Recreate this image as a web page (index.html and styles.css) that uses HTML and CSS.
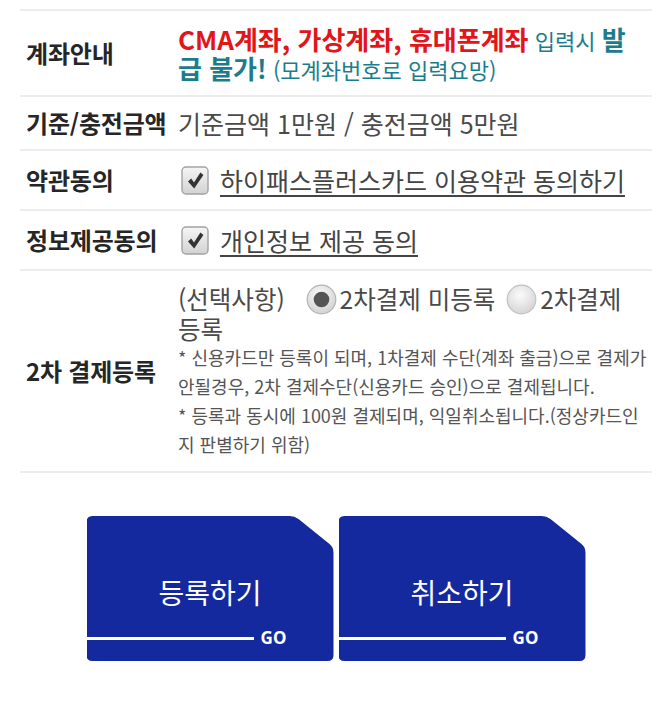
FILE: index.html
```html
<!DOCTYPE html>
<html lang="ko">
<head>
<meta charset="utf-8">
<title>2차 결제등록</title>
<link rel="stylesheet" href="styles.css">
</head>
<body>
<div class="form-table">
  <div class="row row-account">
    <div class="label">계좌안내</div>
    <div class="value account"><span class="warn">CMA계좌, 가상계좌, 휴대폰계좌</span> <span class="teal">입력시</span> <strong class="teal-strong">발급 불가!</strong> <span class="teal">(모계좌번호로 입력요망)</span></div>
  </div>
  <div class="row row-amount">
    <div class="label">기준/충전금액</div>
    <div class="value plain">기준금액 1만원 / 충전금액 5만원</div>
  </div>
  <div class="row row-check">
    <div class="label">약관동의</div>
    <div class="value check-line">
      <svg class="checkbox" width="28" height="29" viewBox="0 0 28 29"><defs><linearGradient id="cbg" x1="0" y1="0" x2="0" y2="1"><stop offset="0" stop-color="#f6f6f6"/><stop offset="1" stop-color="#d2d2d2"/></linearGradient></defs><rect x="1" y="1" width="26" height="27" rx="4" fill="url(#cbg)" stroke="#a3a3a3" stroke-width="1.4"/><path d="M7 15.5 L10.2 12.6 L13 16.6 L19.4 6.6 L22.4 9 L13.2 22.6 Z" fill="#333"/></svg>
      <a class="agree-link" href="#">하이패스플러스카드 이용약관 동의하기</a>
    </div>
  </div>
  <div class="row row-check">
    <div class="label">정보제공동의</div>
    <div class="value check-line">
      <svg class="checkbox" width="28" height="29" viewBox="0 0 28 29"><defs><linearGradient id="cbg2" x1="0" y1="0" x2="0" y2="1"><stop offset="0" stop-color="#f6f6f6"/><stop offset="1" stop-color="#d2d2d2"/></linearGradient></defs><rect x="1" y="1" width="26" height="27" rx="4" fill="url(#cbg2)" stroke="#a3a3a3" stroke-width="1.4"/><path d="M7 15.5 L10.2 12.6 L13 16.6 L19.4 6.6 L22.4 9 L13.2 22.6 Z" fill="#333"/></svg>
      <a class="agree-link" href="#">개인정보 제공 동의</a>
    </div>
  </div>
  <div class="row row-second">
    <div class="label">2차 결제등록</div>
    <div class="value second">
      <div class="radio-line">(선택사항) <svg class="radio first" width="31" height="31" viewBox="0 0 31 31"><defs><radialGradient id="rg1" cx="0.45" cy="0.35" r="0.7"><stop offset="0" stop-color="#fbfbfb"/><stop offset="1" stop-color="#cfcfcf"/></radialGradient></defs><circle cx="15.5" cy="15.5" r="14.3" fill="url(#rg1)" stroke="#b4b4b4" stroke-width="1.2"/><circle cx="15.5" cy="15.5" r="7.8" fill="#555"/></svg>2차결제 미등록 <svg class="radio" width="31" height="31" viewBox="0 0 31 31"><defs><radialGradient id="rg2" cx="0.45" cy="0.35" r="0.7"><stop offset="0" stop-color="#fbfbfb"/><stop offset="1" stop-color="#d2d2d2"/></radialGradient></defs><circle cx="15.5" cy="15.5" r="14.3" fill="url(#rg2)" stroke="#c2c2c2" stroke-width="1.2"/></svg>2차결제 등록</div>
      <p class="notes">* 신용카드만 등록이 되며, 1차결제 수단(계좌 출금)으로 결제가 안될경우, 2차 결제수단(신용카드 승인)으로 결제됩니다.</p>
      <p class="notes">* 등록과 동시에 100원 결제되며, 익일취소됩니다.(정상카드인지 판별하기 위함)</p>
    </div>
  </div>
</div>

<div class="buttons">
  <a class="btn" href="#">
    <span class="btn-text">등록하기</span>
    <span class="btn-foot"><span class="btn-line"></span><span class="go">GO</span></span>
  </a>
  <a class="btn" href="#">
    <span class="btn-text">취소하기</span>
    <span class="btn-foot"><span class="btn-line"></span><span class="go">GO</span></span>
  </a>
</div>
</body>
</html>
```

FILE: styles.css
```css
html, body {
  margin: 0;
  padding: 0;
  background: #ffffff;
}

body {
  font-family: "Noto Sans CJK KR", "Noto Sans", sans-serif;
  color: #4a4a4a;
}

.form-table {
  margin: 9px 20px 0;
  border-top: 2px solid #ececec;
}

.row {
  display: flex;
  align-items: center;
  border-bottom: 2px solid #ececec;
}

.label {
  flex: none;
  width: 152px;
  padding-left: 6px;
  font-size: 24px;
  font-weight: 700;
  color: #262626;
  line-height: 30px;
  white-space: nowrap;
  letter-spacing: -0.2px;
}

.value {
  flex: 1;
  min-width: 0;
}

.row-account {
  min-height: 84px;
}

.account {
  line-height: 27px;
  font-size: 22px;
  padding-top: 2px;
  padding-right: 10px;
}

.warn {
  color: #e2151a;
  font-weight: 700;
  font-size: 26px;
}

.teal {
  color: #1b7d8c;
  font-size: 22px;
}

.teal-strong {
  color: #1b7d8c;
  font-weight: 700;
  font-size: 26px;
}

.row-amount {
  min-height: 52px;
}

.plain {
  font-size: 25px;
  line-height: 34px;
  color: #4a4a4a;
}

.row-check {
  min-height: 58px;
}

.check-line {
  display: flex;
  align-items: center;
  gap: 11px;
  padding-left: 3px;
}

.checkbox {
  flex: none;
  display: block;
}

.agree-link {
  font-size: 25px;
  line-height: 32px;
  color: #444444;
  text-decoration: underline;
  text-decoration-thickness: 2px;
  text-underline-offset: 4px;
  white-space: nowrap;
}

.row-second {
  min-height: 200px;
}

.second {
  padding-top: 13px;
  padding-bottom: 12px;
}

.radio-line {
  font-size: 24.5px;
  line-height: 28px;
  color: #4a4a4a;
  word-break: keep-all;
}

.radio {
  display: inline-block;
  vertical-align: -6px;
  margin: 0 3px 0 4px;
}

.radio.first {
  margin-left: 14px;
}

.notes {
  margin: 0;
  font-size: 18px;
  line-height: 29px;
  color: #555555;
}

.buttons {
  display: flex;
  justify-content: center;
  gap: 5px;
  margin-top: 43px;
}

.btn {
  width: 247px;
  height: 145px;
  background: #15299f;
  clip-path: path('M6 0 H203 Q208 0 212 3 L243 28 Q247 31 247 37 V139 Q247 145 241 145 H6 Q0 145 0 139 V6 Q0 0 6 0 Z');
  display: flex;
  flex-direction: column;
  text-decoration: none;
  color: #ffffff;
}

.btn-text {
  margin-top: 56px;
  font-size: 28px;
  line-height: 40px;
  text-align: center;
}

.btn-foot {
  margin-top: auto;
  margin-bottom: 13px;
  display: flex;
  align-items: center;
  gap: 7px;
  height: 20px;
}

.btn-line {
  width: 167px;
  height: 3px;
  background: #ffffff;
}

.go {
  font-family: "Noto Sans", "Open Sans", sans-serif;
  font-weight: 700;
  font-size: 17px;
  line-height: 20px;
  letter-spacing: 0.3px;
}
```
